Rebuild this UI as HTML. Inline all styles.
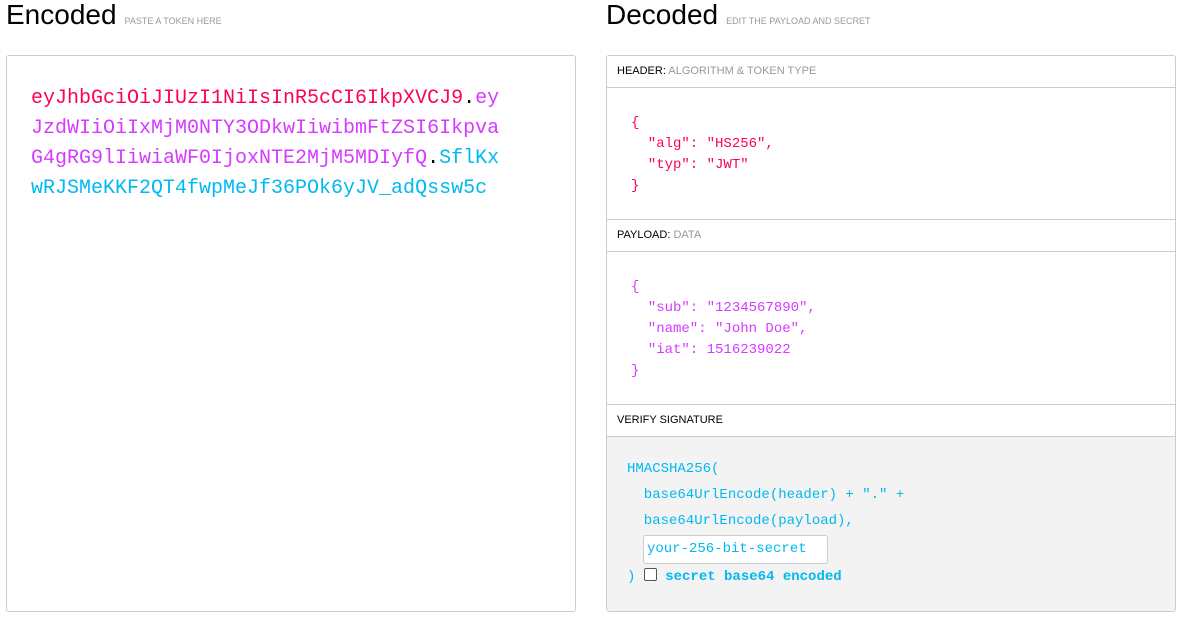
<!DOCTYPE html>
<html><head><style>
body{margin:0;width:1183px;height:618px;background:#fff;font-family:"Liberation Sans",sans-serif;position:relative;overflow:hidden}
.t{position:absolute;top:-1px;font-size:28px;color:#000}
.t small{font-size:9px;color:#999;margin-left:8px;letter-spacing:0}
.box{position:absolute;border:1px solid #ccc;border-radius:3px;box-sizing:border-box}
.mono{font-family:"Liberation Mono",monospace}
.enc{left:6px;top:55px;width:570px;height:557px;padding:28px 0 0 24px;font-size:20px;line-height:30px}
.r{color:#fb015b}.p{color:#d63aff}.c{color:#00b9f1}
.dec{left:606px;top:55px;width:570px;height:557px;overflow:hidden}
.lab{position:absolute;left:0;right:0;height:31px;border-bottom:1px solid #ccc;font-size:11px;line-height:31px;padding-left:10px;color:#000}
.lab span{color:#999}
.sec{position:absolute;left:0;right:0;font-size:14px;line-height:21px;padding-left:24px;box-sizing:border-box}
pre{margin:0;font-family:"Liberation Mono",monospace}
</style></head><body>
<div class="t" style="left:6px">Encoded<small>PASTE A TOKEN HERE</small></div>
<div class="t" style="left:606px">Decoded<small>EDIT THE PAYLOAD AND SECRET</small></div>
<div class="box enc mono"><span class="r">eyJhbGciOiJIUzI1NiIsInR5cCI6IkpXVCJ9</span>.<span class="p">ey<br>JzdWIiOiIxMjM0NTY3ODkwIiwibmFtZSI6Ikpva<br>G4gRG9lIiwiaWF0IjoxNTE2MjM5MDIyfQ</span>.<span class="c">SflKx<br>wRJSMeKKF2QT4fwpMeJf36POk6yJV_adQssw5c</span></div>
<div class="box dec">
<div class="lab" style="top:0">HEADER: <span>ALGORITHM &amp; TOKEN TYPE</span></div>
<div class="sec r" style="top:57px"><pre>{
  "alg": "HS256",
  "typ": "JWT"
}</pre></div>
<div class="lab" style="top:163px;border-top:1px solid #ccc">PAYLOAD: <span>DATA</span></div>
<div class="sec p" style="top:221px"><pre>{
  "sub": "1234567890",
  "name": "John Doe",
  "iat": 1516239022
}</pre></div>
<div class="lab" style="top:348px;border-top:1px solid #ccc">VERIFY SIGNATURE</div>
<div style="position:absolute;top:381px;left:0;right:0;bottom:0;background:#f3f3f3"></div>
<div class="sec c" style="top:400px;padding-left:20px;line-height:26px"><pre>HMACSHA256(
  base64UrlEncode(header) + "." +
  base64UrlEncode(payload),</pre>
<div style="margin:1px 0 0 16px;width:185px;height:29px;border:1px solid #ccc;border-radius:3px;background:#fff;box-sizing:border-box;font-family:'Liberation Mono',monospace;line-height:27px;padding-left:3px">your-256-bit-secret</div>
<div class="mono">) <span style="display:inline-block;width:11px;height:11px;border:1px solid #555;border-radius:2px;background:#fff;vertical-align:-1px"></span> <b>secret base64 encoded</b></div>
</div>
</div>
</body></html>
